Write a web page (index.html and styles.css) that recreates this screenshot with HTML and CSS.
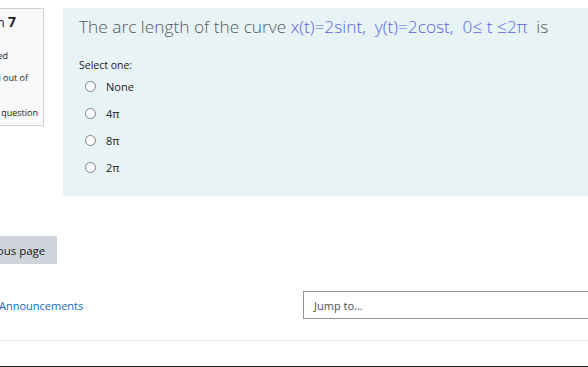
FILE: index.html
```html
<!DOCTYPE html>
<html>
<head>
<meta charset="utf-8">
<link rel="stylesheet" href="styles.css">
</head>
<body>
<div class="page">
  <div class="que">
    <div class="info">
      <div class="qno">Question <b>7</b></div>
      <div class="state">Not answered</div>
      <div class="grade">Marked out of</div>
      <div class="flag">Flag question</div>
    </div>
    <div class="content">
      <div class="qtext">The arc length of the curve <span class="math">x(t)=2sint,&nbsp; y(t)=2cost,&nbsp; 0≤ t ≤2π</span>&nbsp; is</div>
      <div class="prompt">Select one:</div>
      <div class="answer">
        <label class="opt"><span class="radio"></span><span>None</span></label>
        <label class="opt"><span class="radio"></span><span>4π</span></label>
        <label class="opt"><span class="radio"></span><span>8π</span></label>
        <label class="opt"><span class="radio"></span><span>2π</span></label>
      </div>
    </div>
  </div>
  <div class="nav">
    <span class="btn">Previous page</span>
  </div>
  <div class="activity">
    <a class="link" href="#">Announcements</a>
    <div class="jump">Jump to...</div>
  </div>
  <div class="rule"></div>
  <div class="footer"></div>
</div>
</body>
</html>
```

FILE: styles.css
```css
html, body {
  margin: 0;
  padding: 0;
  background: #fff;
}
body {
  font-family: "Open Sans", "Noto Sans", sans-serif;
  color: #1d2125;
  overflow: hidden;
  width: 588px;
  height: 367px;
}
.page {
  width: 588px;
  overflow: hidden;
}
.que {
  display: flex;
  align-items: flex-start;
  padding-top: 8px;
}
.info {
  flex: 0 0 auto;
  width: 120px;
  margin-left: -76px;
  box-sizing: border-box;
  height: 118px;
  background: #f8f9fa;
  border: 1px solid #cfd4d9;
  font-size: 9px;
  color: #1d2125;
  text-align: right;
}
.qno {
  font-size: 13px;
  line-height: 16px;
  margin-top: 5px;
  padding-right: 27px;
  word-spacing: 0px;
}
.qno b {
  font-size: 14px;
  font-weight: 700;
}
.state {
  line-height: 12px;
  margin-top: 20px;
  padding-right: 35px;
}
.grade {
  line-height: 12px;
  margin-top: 10px;
  padding-right: 15px;
}
.flag {
  line-height: 12px;
  margin-top: 23px;
  padding-right: 5px;
}
.content {
  flex: 1 0 auto;
  margin-left: 19px;
  background: #e7f3f5;
  padding: 7px 16px 15px 16px;
  height: 166px;
}
.qtext {
  font-size: 17.3px;
  font-weight: 300;
  line-height: 24px;
  color: #555a60;
  white-space: nowrap;
}
.math {
  color: #5b63e6;
}
.prompt {
  margin-top: 18px;
  font-size: 10.5px;
  line-height: 16px;
  color: #1d2125;
}
.answer {
  display: flex;
  flex-direction: column;
}
.opt {
  display: flex;
  align-items: center;
  height: 27px;
  font-size: 11px;
  color: #1d2125;
}
.radio {
  width: 9px;
  height: 9px;
  border: 1px solid #7a7f85;
  border-radius: 50%;
  background: #fff;
  margin-left: 6px;
  margin-right: 10px;
}
.nav {
  display: flex;
  margin-top: 40px;
}
.btn {
  display: flex;
  align-items: center;
  height: 28px;
  background: #ced4da;
  font-size: 11.5px;
  color: #1d2125;
  padding: 0 12px 0 0;
  margin-left: -30px;
  white-space: nowrap;
}
.activity {
  display: flex;
  align-items: center;
  margin-top: 27px;
  height: 28px;
}
.link {
  font-size: 11px;
  color: #0f6cbf;
  text-decoration: none;
  margin-left: -1px;
  width: 304px;
}
.jump {
  flex: 1 0 auto;
  box-sizing: border-box;
  height: 28px;
  border: 1px solid #8f959e;
  font-size: 11px;
  color: #495057;
  display: flex;
  align-items: center;
  padding-left: 10px;
  margin-right: -20px;
}
.rule {
  margin-top: 21px;
  height: 1px;
  background: #dee2e6;
}
.footer {
  margin-top: 25px;
  height: 10px;
  background: #1d2125;
}
```
